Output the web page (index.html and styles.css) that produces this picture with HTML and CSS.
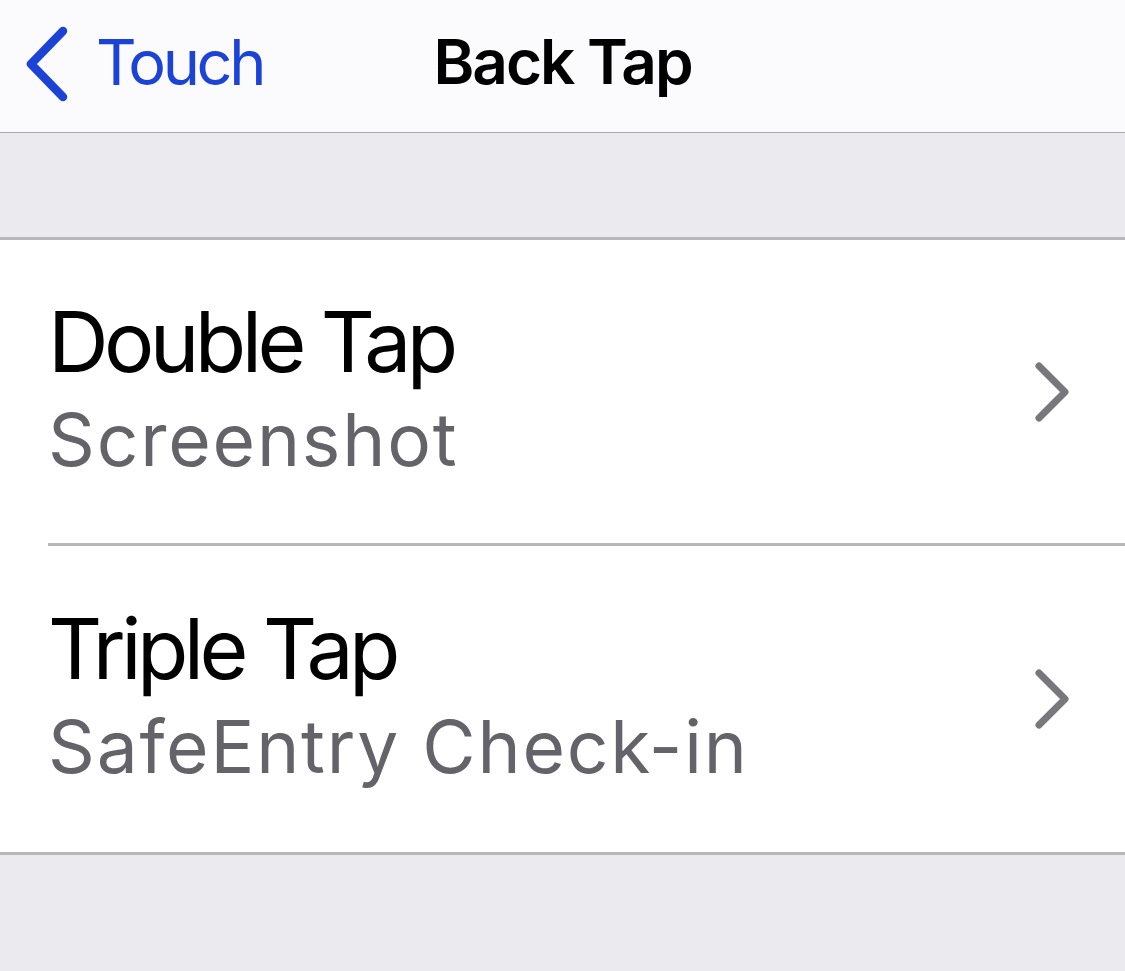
FILE: index.html
```html
<!DOCTYPE html>
<html lang="en">

<head>
  <meta charset="utf-8" />
  <title>Back Tap</title>
  <meta name="viewport" content="width=device-width, initial-scale=1">
  <link rel="stylesheet" href="styles.css">
</head>

<body>
  <!-- =================== NAV =================== -->
  <header class="navbar">
    <a class="back" href="#">
      <svg class="back-icon" viewBox="0 0 44 76" width="44" height="76">
        <path d="M38 5 L6 38 L38 71" />
      </svg>
      <span>Touch</span>
    </a>
    <h1 class="title">Back Tap</h1>
    <div></div>
  </header>

  <div class="spacer"></div>

  <!-- =================== LIST =================== -->
  <ul class="list">
    <li class="cell">
      <div class="cell-inner">
        <div class="cell-text">
          <span class="cell-title">Double Tap</span>
          <span class="cell-value">Screenshot</span>
        </div>
        <svg class="chevron" viewBox="0 0 40 64" width="40" height="64">
          <path d="M6 6 L32 32 L6 58" />
        </svg>
      </div>
    </li>
    <li class="cell">
      <div class="cell-inner">
        <div class="cell-text">
          <span class="cell-title">Triple Tap</span>
          <span class="cell-value">SafeEntry Check-in</span>
        </div>
        <svg class="chevron" viewBox="0 0 40 64" width="40" height="64">
          <path d="M6 6 L32 32 L6 58" />
        </svg>
      </div>
    </li>
  </ul>
</body>

</html>
```

FILE: styles.css
```css
/* ===== RESET & BODY ===== */
* {
  box-sizing: border-box;
  margin: 0;
  padding: 0
}

body {
  font-family: Inter, "Noto Sans", sans-serif;
  background: #eaeaef;
  color: #000;
  width: 1125px;
  min-height: 971px
}

/* ===== NAV BAR ===== */
.navbar {
  height: 133px;
  background: #fbfbfd;
  border-bottom: 1px solid #a7a7ab;
  display: grid;
  grid-template-columns: 1fr auto 1fr;
  align-items: center;
  padding: 0 0 9px 0
}

.back {
  display: flex;
  align-items: center;
  gap: 27px;
  padding-left: 25px;
  color: #1b43d6;
  text-decoration: none;
  font-size: 63px;
  letter-spacing: -3.4px
}

.back-icon {
  margin-top: 5px
}

.back-icon path {
  fill: none;
  stroke: #1b43d6;
  stroke-width: 8.5;
  stroke-linecap: round;
  stroke-linejoin: round
}

.title {
  font-size: 62px;
  font-weight: 600;
  letter-spacing: -2px
}

.spacer {
  height: 104px
}

/* ===== LIST ===== */
.list {
  list-style: none;
  background: #fff;
  border-top: 3px solid #b8b8bc;
  border-bottom: 3px solid #b8b8bc
}

.cell {
  padding-left: 48px
}

.cell-inner {
  display: flex;
  align-items: center;
  justify-content: space-between;
  padding-right: 52px;
  height: 306px;
  border-bottom: 3px solid #b8b8bc
}

.cell:last-child .cell-inner {
  border-bottom: none;
  height: 306px
}

.cell-text {
  display: flex;
  flex-direction: column;
  gap: 8px;
  margin-top: -8px
}

.cell-title {
  font-size: 84px;
  line-height: 96px;
  letter-spacing: -4.6px
}

.cell-value {
  font-size: 73px;
  line-height: 84px;
  color: #636369;
  letter-spacing: 1.8px
}

.chevron path {
  fill: none;
  stroke: #77777d;
  stroke-width: 7;
  stroke-linecap: round;
  stroke-linejoin: round
}
```
